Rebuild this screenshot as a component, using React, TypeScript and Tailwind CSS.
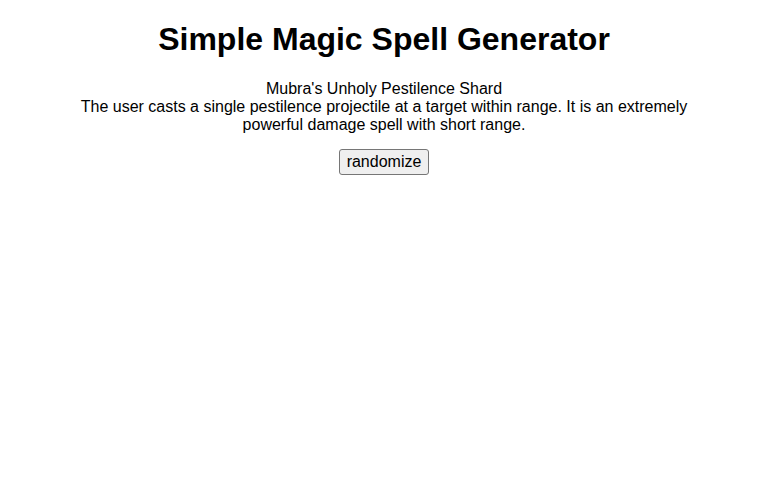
import React, { useState } from "react";

const spells = [
  {
    name: "Mubra's Unholy Pestilence Shard",
    description:
      "The user casts a single pestilence projectile at a target within range. It is an extremely powerful damage spell with short range.",
  },
];

export default function App() {
  const [spell] = useState(spells[0]);
  return (
    <div
      className="text-center text-black bg-white min-h-screen"
      style={{ fontFamily: '"Liberation Sans", Arial, sans-serif' }}
    >
      <h1 className="text-[32px] font-bold leading-[37px] pt-[21px] mb-[22px]">
        Simple Magic Spell Generator
      </h1>
      <div className="text-[16px] leading-[18px] px-[8px]">
        <div>{spell.name}</div>
        <div className="px-[72px]">{spell.description}</div>
      </div>
      <div className="mt-[15px]">
        <button className="text-[16px] leading-[18px] px-[7px] py-[3px] border border-[#767676] bg-[#efefef] rounded-[3px] text-black">
          randomize
        </button>
      </div>
    </div>
  );
}
